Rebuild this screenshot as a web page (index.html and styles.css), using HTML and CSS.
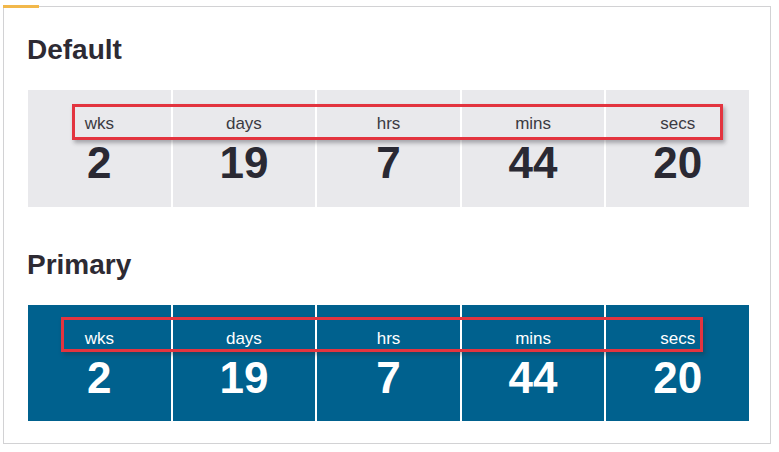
FILE: index.html
```html
<!DOCTYPE html>
<html lang="en">
<head>
<meta charset="utf-8">
<title>Countdown</title>
<link rel="stylesheet" href="styles.css">
</head>
<body>
<div class="frame">
  <h2 class="title">Default</h2>
  <div class="timer timer-default">
    <div class="cell"><div class="label">wks</div><div class="num">2</div></div>
    <div class="cell"><div class="label">days</div><div class="num">19</div></div>
    <div class="cell"><div class="label">hrs</div><div class="num">7</div></div>
    <div class="cell"><div class="label">mins</div><div class="num">44</div></div>
    <div class="cell"><div class="label">secs</div><div class="num">20</div></div>
    <div class="mark mark-default"></div>
  </div>
  <h2 class="title title-second">Primary</h2>
  <div class="timer timer-primary">
    <div class="cell"><div class="label">wks</div><div class="num">2</div></div>
    <div class="cell"><div class="label">days</div><div class="num">19</div></div>
    <div class="cell"><div class="label">hrs</div><div class="num">7</div></div>
    <div class="cell"><div class="label">mins</div><div class="num">44</div></div>
    <div class="cell"><div class="label">secs</div><div class="num">20</div></div>
    <div class="mark mark-primary"></div>
  </div>
</div>
</body>
</html>
```
FILE: styles.css
```css
html, body {
  margin: 0;
  padding: 0;
  background: #ffffff;
}

body {
  font-family: "Liberation Sans", Arial, sans-serif;
}

.frame {
  position: relative;
  box-sizing: border-box;
  margin: 6px 0 0 3px;
  width: 768px;
  height: 438px;
  border: 1px solid #d2d2d4;
  padding: 27px 21px 0 24px;
}

.frame::before {
  content: "";
  position: absolute;
  left: -1px;
  top: -2px;
  width: 36px;
  height: 3px;
  background: #f2b84b;
}

.title {
  margin: 0 0 0 -1px;
  font-size: 28px;
  line-height: 32px;
  font-weight: 700;
  color: #2d2a33;
}

.title-second {
  margin-top: 42px;
}

.timer {
  position: relative;
  margin-top: 24px;
  display: grid;
  grid-template-columns: repeat(5, 1fr);
  column-gap: 2px;
  width: 721px;
  background: #ffffff;
}

.cell {
  display: flex;
  flex-direction: column;
  align-items: center;
  padding: 24px 0 22px;
}

.timer-primary .cell {
  padding-bottom: 21px;
}

.label {
  font-size: 17px;
  line-height: 20px;
}

.num {
  margin-top: 7px;
  font-size: 44px;
  line-height: 44px;
  font-weight: 700;
}

.timer-default .cell {
  background: #e9e9ec;
}

.timer-default .label {
  color: #3b3a42;
}

.timer-default .num {
  color: #2a2933;
}

.timer-primary .cell {
  background: #00618e;
}

.timer-primary .label,
.timer-primary .num {
  color: #ffffff;
}

.mark {
  position: absolute;
  box-sizing: border-box;
  border: 3px solid #e3343f;
  box-shadow: 2px 3px 4px rgba(40, 40, 50, 0.35);
}

.mark-default {
  left: 44px;
  top: 14px;
  width: 651px;
  height: 36px;
}

.mark-primary {
  left: 33px;
  top: 12px;
  width: 642px;
  height: 35px;
}
```
